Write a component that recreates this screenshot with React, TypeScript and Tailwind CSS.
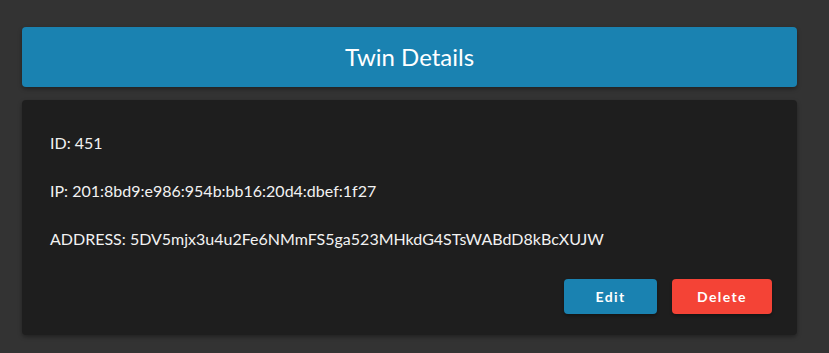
import React from 'react';

const twin = {
  id: 451,
  ip: '201:8bd9:e986:954b:bb16:20d4:dbef:1f27',
  address: '5DV5mjx3u4u2Fe6NMmFS5ga523MHkdG4STsWABdD8kBcXUJW',
};

const App: React.FC = () => {
  return (
    <div
      className="min-h-[353px] w-full bg-[#333333] pl-[22px] pr-[32px] pt-[27px] pb-[19px]"
      style={{ fontFamily: 'Lato, "Noto Sans", sans-serif' }}
    >
      {/* Header */}
      <div className="h-[60px] rounded bg-[#1a82b1] shadow-[0_2px_4px_rgba(0,0,0,0.35)] flex items-center justify-center">
        <h1 className="text-[24px] text-white font-normal">Twin Details</h1>
      </div>

      {/* Details card */}
      <div className="mt-[13px] rounded bg-[#1e1e1e] shadow-[0_2px_4px_rgba(0,0,0,0.35)] pt-[31px] pb-[21px] pl-[28px] pr-[25px]">
        <div className="text-[16px] leading-6 text-[#f2f2f2]">
          <p className="mb-6">ID: {twin.id}</p>
          <p className="mb-6">IP: {twin.ip}</p>
          <p>ADDRESS: {twin.address}</p>
        </div>

        <div className="mt-7 flex justify-end gap-[15px]">
          <button className="h-[35px] w-[93px] rounded bg-[#1a82b1] text-white text-[14px] font-bold tracking-[0.1em] shadow-[0_2px_3px_rgba(0,0,0,0.3)]">
            Edit
          </button>
          <button className="h-[35px] w-[100px] rounded bg-[#f44336] text-white text-[14px] font-bold tracking-[0.1em] shadow-[0_2px_3px_rgba(0,0,0,0.3)]">
            Delete
          </button>
        </div>
      </div>
    </div>
  );
};

export default App;
